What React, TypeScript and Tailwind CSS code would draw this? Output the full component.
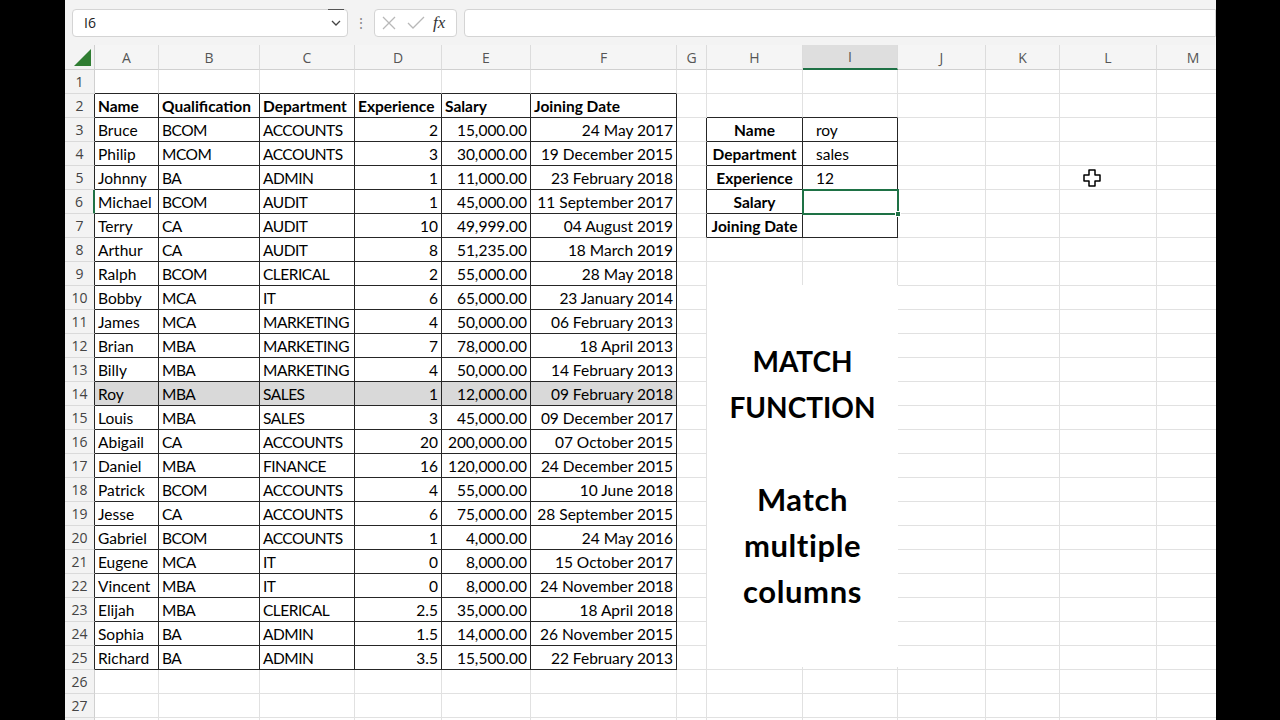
import React from "react";

const data: (string | number)[][] = [
  ["Bruce", "BCOM", "ACCOUNTS", "2", "15,000.00", "24 May 2017"],
  ["Philip", "MCOM", "ACCOUNTS", "3", "30,000.00", "19 December 2015"],
  ["Johnny", "BA", "ADMIN", "1", "11,000.00", "23 February 2018"],
  ["Michael", "BCOM", "AUDIT", "1", "45,000.00", "11 September 2017"],
  ["Terry", "CA", "AUDIT", "10", "49,999.00", "04 August 2019"],
  ["Arthur", "CA", "AUDIT", "8", "51,235.00", "18 March 2019"],
  ["Ralph", "BCOM", "CLERICAL", "2", "55,000.00", "28 May 2018"],
  ["Bobby", "MCA", "IT", "6", "65,000.00", "23 January 2014"],
  ["James", "MCA", "MARKETING", "4", "50,000.00", "06 February 2013"],
  ["Brian", "MBA", "MARKETING", "7", "78,000.00", "18 April 2013"],
  ["Billy", "MBA", "MARKETING", "4", "50,000.00", "14 February 2013"],
  ["Roy", "MBA", "SALES", "1", "12,000.00", "09 February 2018"],
  ["Louis", "MBA", "SALES", "3", "45,000.00", "09 December 2017"],
  ["Abigail", "CA", "ACCOUNTS", "20", "200,000.00", "07 October 2015"],
  ["Daniel", "MBA", "FINANCE", "16", "120,000.00", "24 December 2015"],
  ["Patrick", "BCOM", "ACCOUNTS", "4", "55,000.00", "10 June 2018"],
  ["Jesse", "CA", "ACCOUNTS", "6", "75,000.00", "28 September 2015"],
  ["Gabriel", "BCOM", "ACCOUNTS", "1", "4,000.00", "24 May 2016"],
  ["Eugene", "MCA", "IT", "0", "8,000.00", "15 October 2017"],
  ["Vincent", "MBA", "IT", "0", "8,000.00", "24 November 2018"],
  ["Elijah", "MBA", "CLERICAL", "2.5", "35,000.00", "18 April 2018"],
  ["Sophia", "BA", "ADMIN", "1.5", "14,000.00", "26 November 2015"],
  ["Richard", "BA", "ADMIN", "3.5", "15,500.00", "22 February 2013"],
];

const headers = ["Name", "Qualification", "Department", "Experience", "Salary", "Joining Date"];
const colLetters = ["A", "B", "C", "D", "E", "F", "G", "H", "I", "J", "K", "L", "M"];
const lookupLabels = ["Name", "Department", "Experience", "Salary", "Joining Date"];
const lookupValues = ["roy", "sales", "12", "", ""];

const font = { fontFamily: "Lato, 'Liberation Sans', sans-serif" };

function Cell({ r, c }: { r: number; c: number }) {
  const inT1 = r >= 2 && r <= 25 && c >= 1 && c <= 6;
  const inT2 = r >= 3 && r <= 7 && (c === 8 || c === 9);
  const rightDark = inT1 || inT2 || (r >= 3 && r <= 7 && c === 7);
  const bottomDark =
    (r >= 1 && r <= 25 && c >= 1 && c <= 6) || (r >= 2 && r <= 7 && (c === 8 || c === 9));
  let text = "";
  let bold = false;
  let align = "left";
  let pad = "pl-[3px] pr-[3px]";
  if (r === 2 && c >= 1 && c <= 6) {
    text = headers[c - 1];
    bold = true;
  } else if (r >= 3 && r <= 25 && c >= 1 && c <= 6) {
    text = String(data[r - 3][c - 1]);
    if (c >= 4) align = "right";
  } else if (inT2) {
    if (c === 8) {
      text = lookupLabels[r - 3];
      bold = true;
      align = "center";
    } else {
      text = lookupValues[r - 3];
      pad = "pl-[13px] pr-[3px]";
    }
  }
  const caps = /[A-Z]{2,}/.test(text) && text === text.toUpperCase();
  const gray = r === 14 && c >= 1 && c <= 6;
  return (
    <div
      className={
        "h-[24px] flex items-center overflow-visible whitespace-nowrap border-r border-b text-[15.5px] leading-none text-black pt-[2px] " +
        pad +
        " " +
        (caps ? "tracking-[-0.5px] " : "tracking-normal ") +
        (rightDark ? "border-r-[#262626] " : "border-r-[#e1e1e1] ") +
        (bottomDark ? "border-b-[#262626] " : "border-b-[#e1e1e1] ") +
        (gray ? "bg-[#d9d9d9] " : "bg-white ") +
        (bold ? "font-bold " : "font-normal ") +
        (align === "right" ? "justify-end" : align === "center" ? "justify-center" : "justify-start")
      }
      style={font}
    >
      {text}
    </div>
  );
}

function RowHeader({ r }: { r: number }) {
  const dark = r >= 2 && r <= 25;
  const green = r === 6;
  return (
    <div
      className={
        "h-[24px] flex items-center justify-center border-b border-b-[#dadada] text-[14px] text-[#444] bg-[#f3f3f3] " +
        (green
          ? "border-r-2 border-r-[#1e7145]"
          : dark
          ? "border-r border-r-[#262626]"
          : "border-r border-r-[#d0d0d0]")
      }
      style={{ fontFamily: "'Open Sans', 'Noto Sans', sans-serif" }}
    >
      {r <= 27 ? r : ""}
    </div>
  );
}

export default function App() {
  const rows = Array.from({ length: 28 }, (_, i) => i + 1);
  return (
    <div className="w-[1280px] h-[720px] bg-black flex overflow-hidden">
      <div className="ml-[65px] w-[1151px] h-[720px] bg-white flex flex-col overflow-hidden">
        {/* Formula bar */}
        <div className="h-[45px] shrink-0 bg-[#f3f3f3] flex items-center pl-[7px]">
          <div className="relative w-[276px] h-[28px] bg-white border border-[#d4d4d4] rounded-[4px] flex items-center pl-[11px]">
            <span className="text-[14px] text-[#222]" style={{ fontFamily: "'Open Sans', 'Noto Sans', sans-serif" }}>
              I6
            </span>
            <div className="absolute right-[3px] top-[-1px] w-[16px] h-[1px] bg-[#555]" />
            <svg className="absolute right-[6px] top-[9px]" width="10" height="8" viewBox="0 0 10 8">
              <path d="M1 2 L5 6 L9 2" fill="none" stroke="#444" strokeWidth="1.3" />
            </svg>
          </div>
          <div className="w-[26px] flex justify-center text-[#888] text-[14px] leading-none">⋮</div>
          <div className="w-[83px] h-[28px] bg-white border border-[#d4d4d4] rounded-[4px] flex items-center">
            <svg className="ml-[6px]" width="16" height="16" viewBox="0 0 16 16">
              <path d="M2 2 L14 14 M14 2 L2 14" stroke="#b8b8b8" strokeWidth="1.3" fill="none" />
            </svg>
            <svg className="ml-[10px]" width="18" height="16" viewBox="0 0 18 16">
              <path d="M1 8 L6 13 L17 2" stroke="#b8b8b8" strokeWidth="1.3" fill="none" />
            </svg>
            <span
              className="ml-[8px] text-[17px] italic text-[#333] leading-none"
              style={{ fontFamily: "'Liberation Serif', 'DejaVu Serif', serif" }}
            >
              fx
            </span>
          </div>
          <div className="ml-[7px] flex-1 h-[28px] bg-white border border-[#d4d4d4] rounded-l-[4px]" />
        </div>

        {/* Grid */}
        <div className="relative flex-1">
          <div className="grid grid-cols-[30px_64px_101px_95px_87px_89px_146px_30px_96px_95px_88px_74px_97px_73px]">
            <div className="h-[25px] bg-[#f3f3f3] border-b border-b-[#d0d0d0] border-r border-r-[#d0d0d0] flex items-end justify-end pr-[3px] pb-[3px]">
              <svg width="17" height="17" viewBox="0 0 17 17">
                <polygon points="17,0 17,17 0,17" fill="#2f7d32" />
              </svg>
            </div>
            {colLetters.map((l) => (
              <div
                key={l}
                className={
                  "h-[25px] flex items-center justify-center text-[14px] text-[#555] border-r border-r-[#dcdcdc] " +
                  (l === "I"
                    ? "bg-[#dedede] border-b-2 border-b-[#1e7145]"
                    : "bg-[#f5f5f5] border-b border-b-[#d0d0d0]")
                }
                style={{ fontFamily: "'Open Sans', 'Noto Sans', sans-serif" }}
              >
                {l}
              </div>
            ))}
            {rows.map((r) => (
              <React.Fragment key={r}>
                <RowHeader r={r} />
                {colLetters.map((_, i) => (
                  <Cell key={i} r={r} c={i + 1} />
                ))}
              </React.Fragment>
            ))}
          </div>

          {/* Selection I6 */}
          <div className="absolute left-[737px] top-[144px] w-[97px] h-[26px] border-2 border-[#1e7145] pointer-events-none" />
          <div className="absolute left-[830px] top-[166px] w-[6px] h-[6px] bg-[#1e7145] border border-white" />

          {/* Text box */}
          <div
            className="absolute left-[642px] top-[240px] w-[191px] h-[382px] bg-white flex flex-col items-center justify-center text-black font-bold leading-[46px] text-center"
            style={font}
          >
            <div className="text-[28px]">MATCH</div>
            <div className="text-[28px]">FUNCTION</div>
            <div className="text-[28px]">&nbsp;</div>
            <div className="text-[31px] tracking-[0.6px]">Match</div>
            <div className="text-[31px] tracking-[0.6px]">multiple</div>
            <div className="text-[31px] tracking-[0.6px]">columns</div>
          </div>

          {/* Cursor */}
          <svg className="absolute left-[1018px] top-[124px]" width="18" height="18" viewBox="0 0 18 18">
            <path
              d="M6 1 H12 V6 H17 V12 H12 V17 H6 V12 H1 V6 H6 Z"
              fill="white"
              stroke="black"
              strokeWidth="1.5"
              strokeLinejoin="round"
            />
          </svg>
        </div>
      </div>
    </div>
  );
}
